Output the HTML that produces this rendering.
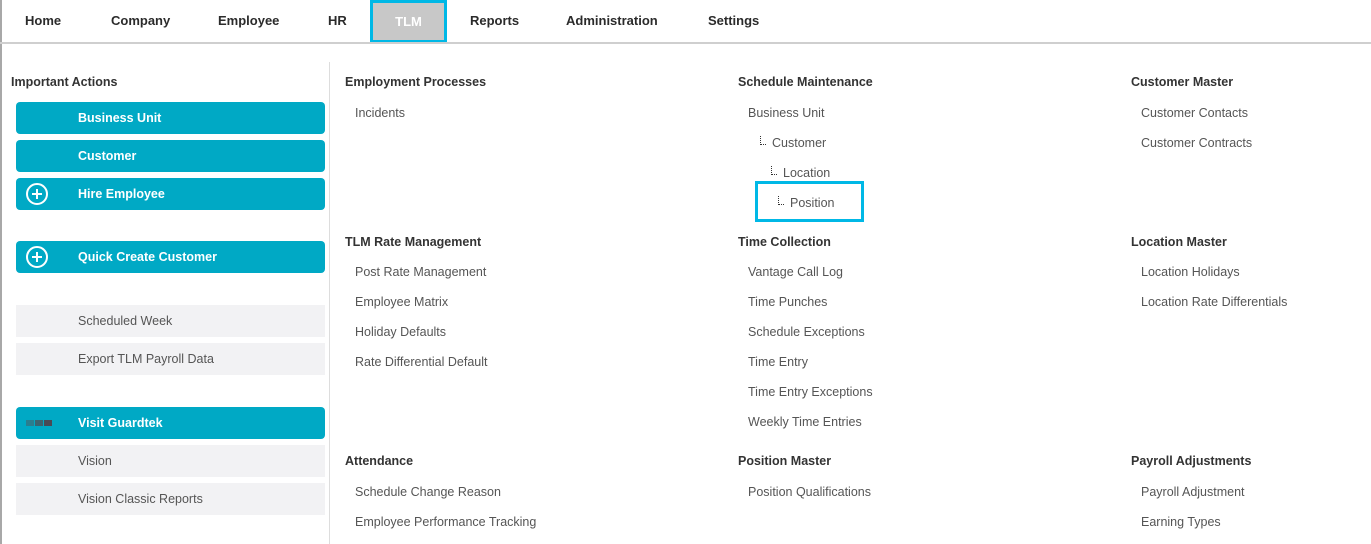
<!DOCTYPE html>
<html><head><meta charset="utf-8"><style>
*{margin:0;padding:0;box-sizing:border-box}
body{width:1371px;height:544px;background:#fff;font-family:"Liberation Sans",sans-serif;position:relative;overflow:hidden;color:#333}
.abs{position:absolute;white-space:nowrap}
.nav{font-size:13px;font-weight:bold;color:#2b2b2b;top:13px}
.tlm{left:370px;top:0;width:77px;height:43px;background:#c8c8c8;border:3px solid #00b8e6;color:#fff;font-size:13px;font-weight:bold;text-align:center;line-height:37px}
.hl{left:0;top:42px;width:1371px;height:2px;background:#cfcfcf}
.vl{left:0;top:0;width:2px;height:544px;background:#a8a8a8}
.dv{left:329px;top:62px;width:1px;height:482px;background:#ddd}
.h{font-size:12.5px;font-weight:bold;color:#333}
.i{font-size:12.5px;color:#555}
.btn{left:16px;width:309px;height:32px;border-radius:4px;background:#00a9c5;color:#fff;font-weight:bold;font-size:12.5px;line-height:33px;padding-left:62px}
.g{left:16px;width:309px;height:32px;background:#f2f2f4;color:#555;font-size:12.5px;line-height:33px;padding-left:62px}
.plus{position:absolute;left:10px;top:5px;width:22px;height:22px;border:2px solid #fff;border-radius:50%}
.plus:before{content:"";position:absolute;left:4px;top:8px;width:10px;height:2px;background:#fff}
.plus:after{content:"";position:absolute;left:8px;top:4px;width:2px;height:10px;background:#fff}
.tr{display:inline-block;width:6px;height:9px;border-left:1px dotted #333;border-bottom:1px dotted #333;margin-right:6px;vertical-align:2px}
.box{left:755px;top:181px;width:109px;height:41px;border:3px solid #00b8e6}
</style></head><body>
<div class="abs vl"></div>
<div class="abs tlm">TLM</div>
<div class="abs nav" style="left:25px">Home</div>
<div class="abs nav" style="left:111px">Company</div>
<div class="abs nav" style="left:218px">Employee</div>
<div class="abs nav" style="left:328px">HR</div>
<div class="abs nav" style="left:470px">Reports</div>
<div class="abs nav" style="left:566px">Administration</div>
<div class="abs nav" style="left:708px">Settings</div>
<div class="abs hl"></div>
<div class="abs dv"></div>

<div class="abs h" style="left:11px;top:75px">Important Actions</div>
<div class="abs btn" style="top:102px">Business Unit</div>
<div class="abs btn" style="top:140px">Customer</div>
<div class="abs btn" style="top:178px"><span class="plus"></span>Hire Employee</div>
<div class="abs btn" style="top:241px"><span class="plus"></span>Quick Create Customer</div>
<div class="abs g" style="top:305px">Scheduled Week</div>
<div class="abs g" style="top:343px">Export TLM Payroll Data</div>
<div class="abs btn" style="top:407px"><span style="position:absolute;left:10px;top:13px;width:8px;height:6px;background:#2a7e8f"></span><span style="position:absolute;left:19px;top:13px;width:8px;height:6px;background:#3b6470"></span><span style="position:absolute;left:28px;top:13px;width:8px;height:6px;background:#4a4a55"></span>Visit Guardtek</div>
<div class="abs g" style="top:445px">Vision</div>
<div class="abs g" style="top:483px">Vision Classic Reports</div>

<div class="abs h" style="left:345px;top:75px">Employment Processes</div>
<div class="abs i" style="left:355px;top:106px">Incidents</div>

<div class="abs h" style="left:738px;top:75px">Schedule Maintenance</div>
<div class="abs i" style="left:748px;top:106px">Business Unit</div>
<div class="abs i" style="left:760px;top:136px"><span class="tr"></span>Customer</div>
<div class="abs i" style="left:771px;top:166px"><span class="tr"></span>Location</div>
<div class="abs i" style="left:778px;top:196px"><span class="tr"></span>Position</div>
<div class="abs box"></div>

<div class="abs h" style="left:1131px;top:75px">Customer Master</div>
<div class="abs i" style="left:1141px;top:106px">Customer Contacts</div>
<div class="abs i" style="left:1141px;top:136px">Customer Contracts</div>

<div class="abs h" style="left:345px;top:235px">TLM Rate Management</div>
<div class="abs i" style="left:355px;top:265px">Post Rate Management</div>
<div class="abs i" style="left:355px;top:295px">Employee Matrix</div>
<div class="abs i" style="left:355px;top:325px">Holiday Defaults</div>
<div class="abs i" style="left:355px;top:355px">Rate Differential Default</div>

<div class="abs h" style="left:738px;top:235px">Time Collection</div>
<div class="abs i" style="left:748px;top:265px">Vantage Call Log</div>
<div class="abs i" style="left:748px;top:295px">Time Punches</div>
<div class="abs i" style="left:748px;top:325px">Schedule Exceptions</div>
<div class="abs i" style="left:748px;top:355px">Time Entry</div>
<div class="abs i" style="left:748px;top:385px">Time Entry Exceptions</div>
<div class="abs i" style="left:748px;top:415px">Weekly Time Entries</div>

<div class="abs h" style="left:1131px;top:235px">Location Master</div>
<div class="abs i" style="left:1141px;top:265px">Location Holidays</div>
<div class="abs i" style="left:1141px;top:295px">Location Rate Differentials</div>

<div class="abs h" style="left:345px;top:454px">Attendance</div>
<div class="abs i" style="left:355px;top:485px">Schedule Change Reason</div>
<div class="abs i" style="left:355px;top:515px">Employee Performance Tracking</div>

<div class="abs h" style="left:738px;top:454px">Position Master</div>
<div class="abs i" style="left:748px;top:485px">Position Qualifications</div>

<div class="abs h" style="left:1131px;top:454px">Payroll Adjustments</div>
<div class="abs i" style="left:1141px;top:485px">Payroll Adjustment</div>
<div class="abs i" style="left:1141px;top:515px">Earning Types</div>
</body></html>
